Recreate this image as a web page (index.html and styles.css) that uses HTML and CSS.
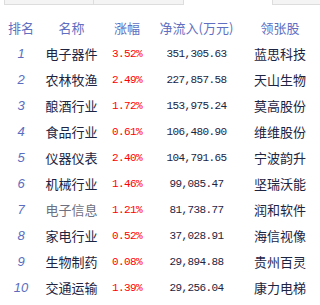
FILE: index.html
```html
<!DOCTYPE html>
<html>
<head>
<meta charset="utf-8">
<link rel="stylesheet" href="styles.css">
</head>
<body>
<div class="tabs">
  <div class="tab t1"></div>
  <div class="tab t2"></div>
  <div class="spacer"></div>
  <div class="tab t3"></div>
</div>
<table class="rank">
  <colgroup>
    <col class="c1"><col class="c2"><col class="c3"><col class="c4"><col class="c5">
  </colgroup>
  <thead>
    <tr><th>排名</th><th>名称</th><th>涨幅</th><th>净流入(万元)</th><th>领张股</th></tr>
  </thead>
  <tbody>
    <tr><td class="no">1</td><td class="name">电子器件</td><td class="pct">3.52%</td><td class="num">351,305.63</td><td class="lead">蓝思科技</td></tr>
    <tr><td class="no">2</td><td class="name">农林牧渔</td><td class="pct">2.49%</td><td class="num">227,857.58</td><td class="lead">天山生物</td></tr>
    <tr><td class="no">3</td><td class="name">酿酒行业</td><td class="pct">1.72%</td><td class="num">153,975.24</td><td class="lead">莫高股份</td></tr>
    <tr><td class="no">4</td><td class="name">食品行业</td><td class="pct">0.61%</td><td class="num">106,480.90</td><td class="lead">维维股份</td></tr>
    <tr><td class="no">5</td><td class="name">仪器仪表</td><td class="pct">2.40%</td><td class="num">104,791.65</td><td class="lead">宁波韵升</td></tr>
    <tr><td class="no">6</td><td class="name">机械行业</td><td class="pct">1.46%</td><td class="num">99,085.47</td><td class="lead">坚瑞沃能</td></tr>
    <tr><td class="no">7</td><td class="name visited">电子信息</td><td class="pct">1.21%</td><td class="num">81,738.77</td><td class="lead">润和软件</td></tr>
    <tr><td class="no">8</td><td class="name">家电行业</td><td class="pct">0.52%</td><td class="num">37,028.91</td><td class="lead">海信视像</td></tr>
    <tr><td class="no">9</td><td class="name">生物制药</td><td class="pct">0.08%</td><td class="num">29,894.88</td><td class="lead">贵州百灵</td></tr>
    <tr><td class="no">10</td><td class="name">交通运输</td><td class="pct">1.39%</td><td class="num">29,256.04</td><td class="lead">康力电梯</td></tr>
  </tbody>
</table>
</body>
</html>
```
FILE: styles.css
```css
html, body {
  margin: 0;
  padding: 0;
  background: #ffffff;
  width: 320px;
  height: 305px;
  overflow: hidden;
}
body {
  font-family: "Noto Sans CJK SC", "Noto Sans", sans-serif;
}
.tabs {
  display: flex;
  height: 5px;
  padding-left: 4px;
}
.tab {
  height: 4px;
  background: #f4f4f4;
  border: 1px solid #dddddd;
  border-top: none;
  box-sizing: content-box;
}
.t1 { width: 88px; }
.t2 { width: 89px; border-left: none; }
.spacer { flex: 1; }
.t3 { width: 47px; border-right: none; }
.rank {
  border-collapse: collapse;
  table-layout: fixed;
  width: 320px;
  margin-top: 10px;
}
.c1 { width: 42px; }
.c2 { width: 59px; }
.c3 { width: 52px; }
.c4 { width: 87px; }
.c5 { width: 80px; }
.rank th, .rank td {
  padding: 0;
  text-align: center;
  height: 26px;
  line-height: 26px;
  white-space: nowrap;
}
.rank th {
  font-weight: normal;
  font-size: 13px;
  color: #5f6fc2;
}
.no {
  font-family: "Liberation Sans", Arial, sans-serif;
  font-style: italic;
  font-size: 13px;
  color: #5a6dc0;
}
.name, .lead {
  font-size: 13px;
  color: #1c2442;
}
.name.visited {
  color: #6d7080;
}
.pct, .num {
  font-family: "Liberation Mono", monospace;
  font-size: 11px;
  letter-spacing: -0.6px;
}
.pct { color: #ff0000; }
.num { color: #1c2442; }
```
